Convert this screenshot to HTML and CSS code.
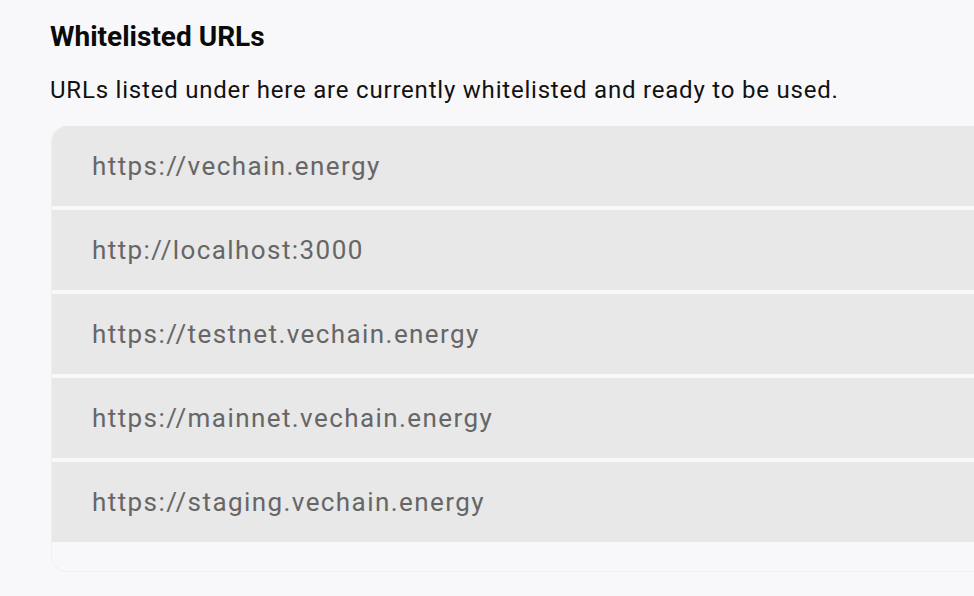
FILE: index.html
```html
<!DOCTYPE html>
<html>
<head>
<meta charset="utf-8">
<link rel="stylesheet" href="styles.css">
</head>
<body>
<main class="page">
  <h2 class="title">Whitelisted URLs</h2>
  <p class="subtitle">URLs listed under here are currently whitelisted and ready to be used.</p>
  <ul class="list">
    <li class="item">https://vechain.energy</li>
    <li class="item">http://localhost:3000</li>
    <li class="item">https://testnet.vechain.energy</li>
    <li class="item">https://mainnet.vechain.energy</li>
    <li class="item">https://staging.vechain.energy</li>
  </ul>
</main>
</body>
</html>
```
FILE: styles.css
```css
html, body {
  margin: 0;
  padding: 0;
  background: #f8f8fa;
  font-family: Roboto, "Liberation Sans", sans-serif;
  overflow: hidden;
}
.page {
  padding: 21px 0 0 50px;
  width: 1000px;
}
.title {
  margin: 0;
  font-size: 28px;
  font-weight: 700;
  color: #0a0a0a;
  line-height: 32px;
}
.subtitle {
  margin: 21px 0 0 0;
  font-size: 24px;
  color: #111;
  letter-spacing: 0.79px;
  line-height: 32px;
}
.list {
  list-style: none;
  margin: 20px 0 0 1px;
  padding: 0 0 29px 0;
  border: 1px solid #efeff1;
  border-top: none;
  border-right: none;
  border-radius: 16px 0 0 16px;
  overflow: hidden;
  display: flex;
  flex-direction: column;
  gap: 4px;
}
.item {
  height: 80px;
  display: flex;
  align-items: center;
  padding-left: 40px;
  background: #e8e8e8;
  color: #666;
  font-size: 26px;
  letter-spacing: 1.42px;
}
```
